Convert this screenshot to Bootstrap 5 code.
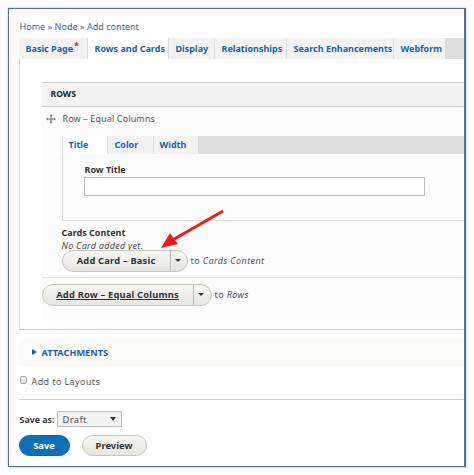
<!DOCTYPE html>
<html lang="en"><head><meta charset="utf-8">
<link href="https://cdn.jsdelivr.net/npm/bootstrap@5.3.0/dist/css/bootstrap.min.css" rel="stylesheet">
<style>
html,body{height:475px;overflow:hidden;background:#fff}
body{font-family:"Noto Sans","DejaVu Sans",sans-serif;font-size:9px;color:#333;line-height:11px}
.shot-frame{position:relative;margin:8px 0 0 8px;width:458px;height:459px;border:1.5px solid #4f6f9f;border-right-width:2px;overflow:hidden;padding:0 0 0 9.5px;box-shadow:0 0 2px #9fb3cf}
.crumbs{height:28.5px;padding:12px 0 0 1px;color:#2f6aa0;font-size:9px;letter-spacing:.03px}
.tabs-a{height:21px;background:#ddd;gap:1px;flex-wrap:nowrap}
.tabs-a a,.tabs-b a{display:block;flex:none;text-decoration:none;color:#1b62a3;font-weight:700;font-size:9px;background:#f2f2f2;white-space:nowrap}
.tabs-a a{line-height:21px;padding-left:7px}
.tabs-b a{padding-left:6px}
.tabs-a a.on,.tabs-b a.on{background:#fff}
.tabs-a sup{color:#e0101a;font-size:9px;top:-.3em;line-height:0;margin-left:-1.5px}
.w-basic{width:68px}.w-rows{width:80px}.w-disp{width:45px}.w-rel{width:71px}.w-search{width:106px}.w-web{width:51px}
.w-title{width:44px;margin-left:1px}.w-color{width:45px;padding-left:7px!important}.w-width{width:44px}
.tab-body{height:271.5px;border-left:1px solid #d8d8d8;border-bottom:1px solid #ccc;padding:23px 0 0 22px}
.rows-head{height:25px;background:#f4f4f4;border-top:1px solid #ccc;border-bottom:1px solid #ccc;padding-left:9px;line-height:23px;color:#222;font-weight:700;font-size:8.6px}
.rows-body{background:#fcfcfc;height:214px;padding-top:6px}
.row-line{height:12px;padding-left:4px;gap:3px;color:#555;letter-spacing:.12px;line-height:12px;font-size:9px}
.inner-wrap{margin:11px 0 0 20px}
.tabs-b{height:18px;background:#ddd;gap:1px;flex-wrap:nowrap}
.tabs-b a{line-height:18px}
.panel-b{height:67px;border-left:1px solid #d5d5d5;border-bottom:1px solid #ddd;padding:10px 0 0 21px}
.panel-b .lab{padding-left:1px}
.lab{font-weight:700;font-size:9px;color:#333;line-height:11px}
.fake-input{width:341px;height:19px;border:1px solid #bbb;background:#fff;margin-top:2px;display:block;border-radius:0;padding:0}
.cards-lab{margin:6px 0 0 20px;line-height:12px}
.no-card{margin-left:20px;padding-top:1px;font-style:italic;color:#444;font-size:9px;letter-spacing:.28px;line-height:11px}
.btn-split{height:22px;flex:none;border:1px solid #c6c6c0;border-radius:11px;background:linear-gradient(#f7f7f3,#e6e5e0);overflow:hidden;color:#333;font-weight:700;font-size:9.3px;letter-spacing:.2px}
.btn-split .main{display:flex;align-items:center;justify-content:center;height:100%}
.btn-split .drop{display:flex;align-items:center;justify-content:center;height:100%;border-left:1px solid #bdbdb8;padding-right:2px}
.caret-d{width:0;height:0;border:3px solid transparent;border-top:3.5px solid #333;border-bottom:0}
.to-text{color:#555;font-size:9px;letter-spacing:.4px;margin-left:3px}
.add-card{margin:-1px 0 0 20px}
.add-card .btn-split{width:126px}
.add-card .main{width:108px}
.add-card .drop{width:17px}
.sep-row{border-top:1px solid #e6e6e6;margin-top:5px;padding-top:6px}
.sep-row .btn-split{width:170px}
.sep-row .main{width:151px;text-decoration:underline}
.sep-row .drop{width:18px}
.attach{margin-top:9px;height:28px;padding:0 0 2px 13px;background:#fafaf8;gap:5px;color:#1b62a3;font-weight:700;font-size:9.2px}
.tri{width:0;height:0;border:3px solid transparent;border-left:5px solid #1b62a3;border-right:0}
.cb-row{margin-top:9px;height:11px;gap:5px;color:#555;font-size:9px;letter-spacing:.4px}
.fake-check{width:7px;height:8px;border:1px solid #aaa;border-radius:2px;background:linear-gradient(#f4f4f4,#ddd);margin:-3px 0 0 1px}
.rule-x{border-top:1px solid #ccc;margin-top:12px}
.save-row{margin-top:11px;height:16px}
.save-lab{color:#222;font-weight:600;font-size:9px;width:38px;padding-left:1px;flex:none;white-space:nowrap}
.sel-box{width:65px;height:16px;background:#f2f2f2;border:1px solid #bbb;padding:0 5px;color:#555;font-size:9.4px;letter-spacing:.4px}
.sel-caret{width:0;height:0;border:3px solid transparent;border-top:4px solid #333;border-bottom:0}
.act-row{margin-top:8px;gap:12px}
.btn.go-save,.btn.go-prev{height:21px;padding:0;border-radius:11px;font-weight:700;font-size:9.4px;line-height:19px}
.btn.go-save{width:51px;background:#0a71b8;border:1px solid #0a65a6;color:#fff}
.btn.go-prev{width:65px;background:linear-gradient(#f7f7f3,#e6e5e0);border:1px solid #c6c6c0;color:#333}
.red-arrow{position:absolute;left:148px;top:200px;pointer-events:none}
</style></head>
<body>
<div class="shot-frame">
  <div class="crumbs">Home » Node » Add content</div>
  <nav class="tabs-a d-flex">
    <a class="w-basic" href="#">Basic Page <sup>*</sup></a>
    <a class="on w-rows" href="#">Rows and Cards</a>
    <a class="w-disp" href="#">Display</a>
    <a class="w-rel" href="#">Relationships</a>
    <a class="w-search" href="#">Search Enhancements</a>
    <a class="w-web" href="#">Webform</a>
  </nav>
  <div class="tab-body">
    <div class="rows-head">ROWS</div>
    <div class="rows-body">
      <div class="row-line d-flex align-items-center">
        <svg width="10" height="10" viewBox="0 0 10 10"><path d="M5 1V9M1 5H9" stroke="#777" stroke-width="1.2"/><path d="M5 0 3.6 2h2.8zM5 10 3.6 8h2.8zM0 5l2-1.4v2.8zM10 5 8 3.6v2.8z" fill="#777"/></svg>
        <span class="ms-1">Row – Equal Columns</span>
      </div>
      <div class="inner-wrap">
        <nav class="tabs-b d-flex">
          <a class="on w-title" href="#">Title</a>
          <a class="w-color" href="#">Color</a>
          <a class="w-width" href="#">Width</a>
        </nav>
        <div class="panel-b">
          <div class="lab">Row Title</div>
          <input class="fake-input" type="text" aria-label="Row Title">
        </div>
      </div>
      <div class="lab cards-lab">Cards Content</div>
      <div class="no-card">No Card added yet.</div>
      <div class="add-card d-flex align-items-center">
        <div class="btn-split d-flex"><span class="main">Add Card – Basic</span><span class="drop"><i class="caret-d"></i></span></div>
        <span class="to-text">to <em>Cards Content</em></span>
      </div>
      <div class="sep-row d-flex align-items-center">
        <div class="btn-split d-flex"><span class="main">Add Row – Equal Columns</span><span class="drop"><i class="caret-d"></i></span></div>
        <span class="to-text">to <em>Rows</em></span>
      </div>
    </div>
  </div>
  <div class="attach d-flex align-items-center"><i class="tri"></i>ATTACHMENTS</div>
  <div class="cb-row d-flex align-items-center"><i class="fake-check"></i>Add to Layouts</div>
  <div class="rule-x"></div>
  <div class="save-row d-flex align-items-center"><span class="save-lab">Save as:</span>
    <div class="sel-box d-flex align-items-center justify-content-between"><span>Draft</span><i class="sel-caret"></i></div>
  </div>
  <div class="act-row d-flex">
    <button class="btn go-save" type="button">Save</button>
    <button class="btn go-prev" type="button">Preview</button>
  </div>
  <svg class="red-arrow" width="70" height="42" viewBox="0 0 70 42"><path d="M66 2 14 32" stroke="#ea1c1c" stroke-width="3" fill="none"/><path d="M4 39 13 24 21 35z" fill="#ea1c1c"/></svg>
</div>
<script src="https://cdn.jsdelivr.net/npm/bootstrap@5.3.0/dist/js/bootstrap.bundle.min.js"></script>
</body></html>
